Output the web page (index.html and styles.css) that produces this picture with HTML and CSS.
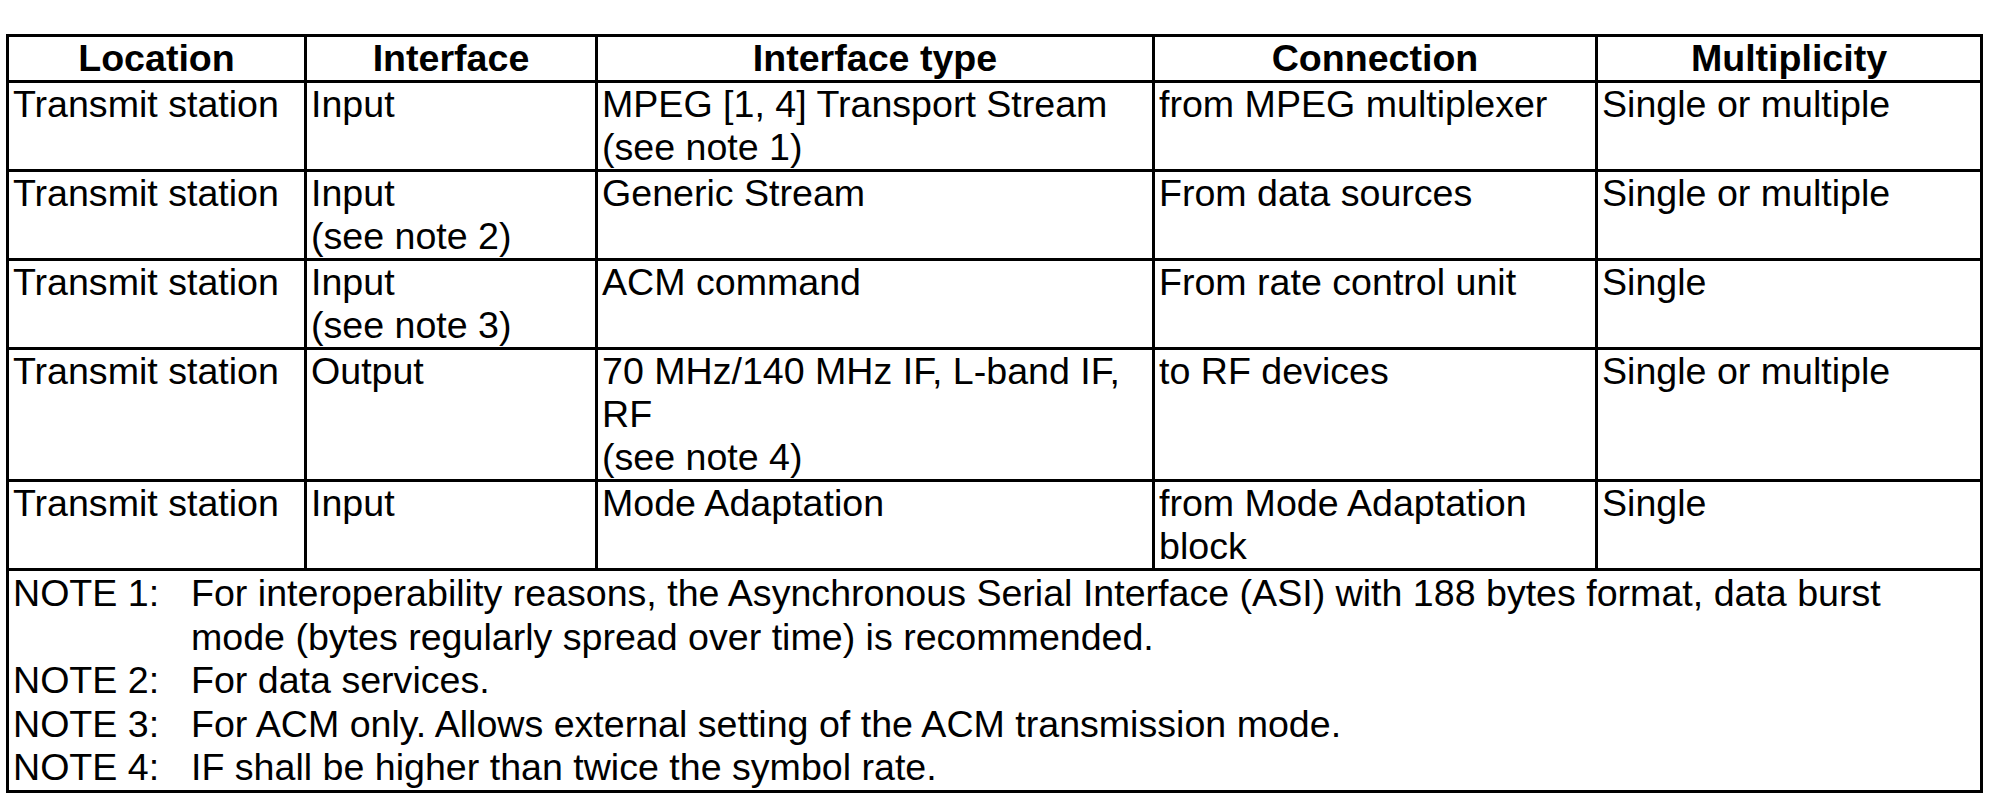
FILE: index.html
```html
<!DOCTYPE html>
<html lang="en">
<head>
<meta charset="utf-8">
<title>Interfaces</title>
<link rel="stylesheet" href="styles.css">
</head>
<body>
<div class="page">
<table class="grid">
  <colgroup>
    <col class="c1"><col class="c2"><col class="c3"><col class="c4"><col class="c5">
  </colgroup>
  <thead>
    <tr>
      <th>Location</th>
      <th>Interface</th>
      <th>Interface type</th>
      <th>Connection</th>
      <th>Multiplicity</th>
    </tr>
  </thead>
  <tbody>
    <tr>
      <td>Transmit station</td>
      <td>Input</td>
      <td>MPEG [1, 4] Transport Stream<br>(see note 1)</td>
      <td>from MPEG multiplexer</td>
      <td>Single or multiple</td>
    </tr>
    <tr>
      <td>Transmit station</td>
      <td>Input<br>(see note 2)</td>
      <td>Generic Stream</td>
      <td>From data sources</td>
      <td>Single or multiple</td>
    </tr>
    <tr>
      <td>Transmit station</td>
      <td>Input<br>(see note 3)</td>
      <td>ACM command</td>
      <td>From rate control unit</td>
      <td>Single</td>
    </tr>
    <tr>
      <td>Transmit station</td>
      <td>Output</td>
      <td>70 MHz/140 MHz IF, L-band IF,<br>RF<br>(see note 4)</td>
      <td>to RF devices</td>
      <td>Single or multiple</td>
    </tr>
    <tr>
      <td>Transmit station</td>
      <td>Input</td>
      <td>Mode Adaptation</td>
      <td>from Mode Adaptation<br>block</td>
      <td>Single</td>
    </tr>
    <tr>
      <td class="notes" colspan="5">
        <div class="note"><span class="label">NOTE 1:</span><span class="text">For interoperability reasons, the Asynchronous Serial Interface (ASI) with 188 bytes format, data burst<br>mode (bytes regularly spread over time) is recommended.</span></div>
        <div class="note"><span class="label">NOTE 2:</span><span class="text">For data services.</span></div>
        <div class="note"><span class="label">NOTE 3:</span><span class="text">For ACM only. Allows external setting of the ACM transmission mode.</span></div>
        <div class="note"><span class="label">NOTE 4:</span><span class="text">IF shall be higher than twice the symbol rate.</span></div>
      </td>
    </tr>
  </tbody>
</table>
</div>
</body>
</html>
```

FILE: styles.css
```css
html, body {
  margin: 0;
  padding: 0;
  background: #ffffff;
}
.page {
  padding: 34px 0 0 6px;
}
.grid {
  border-collapse: collapse;
  table-layout: fixed;
  width: 1976px;
  font-family: "Liberation Sans", Arial, sans-serif;
  font-size: 37.6px;
  line-height: 43px;
  color: #000000;
}
.c1 { width: 298px; }
.c2 { width: 291px; }
.c3 { width: 557px; }
.c4 { width: 443px; }
.c5 { width: 385px; }
.grid th,
.grid td {
  border: 3px solid #000000;
  padding: 0 4px;
  vertical-align: top;
  text-align: left;
  white-space: nowrap;
}
.grid th {
  font-weight: bold;
  text-align: center;
}
.grid td.notes {
  padding: 1px 4px 0;
  line-height: 43.6px;
}
.note {
  display: grid;
  grid-template-columns: 178px 1fr;
}
```
